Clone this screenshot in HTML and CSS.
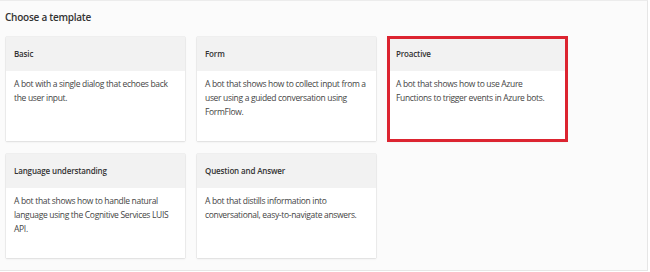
FILE: index.html
```html
<!DOCTYPE html>
<html lang="en">
<head>
  <meta charset="UTF-8">
  <title>Choose a template</title>
  <link rel="stylesheet" href="styles.css">
</head>
<body>
  <div class="panel">
    <h2 class="panel-title">Choose a template</h2>

    <!-- Template cards -->
    <div class="template-grid">
      <div class="card">
        <div class="card-head">Basic</div>
        <div class="card-body">A bot with a single dialog that echoes back the user input.</div>
      </div>
      <div class="card">
        <div class="card-head">Form</div>
        <div class="card-body">A bot that shows how to collect input from a user using a guided conversation using FormFlow.</div>
      </div>
      <div class="card selected">
        <div class="card-head">Proactive</div>
        <div class="card-body">A bot that shows how to use Azure Functions to trigger events in Azure bots.</div>
      </div>
      <div class="card">
        <div class="card-head">Language understanding</div>
        <div class="card-body">A bot that shows how to handle natural language using the Cognitive Services LUIS API.</div>
      </div>
      <div class="card">
        <div class="card-head">Question and Answer</div>
        <div class="card-body">A bot that distills information into conversational, easy-to-navigate answers.</div>
      </div>
    </div>
  </div>
</body>
</html>
```

FILE: styles.css
```css
/* Page */
body {
  margin: 0;
  font-family: "Open Sans", "Noto Sans", sans-serif;
  background: #ffffff;
  color: #333;
}

.panel {
  width: 648px;
  height: 271px;
  box-sizing: border-box;
  border-top: 1px solid #ececec;
  border-right: 1px solid #e6e6e6;
  border-bottom: 1px solid #e6e6e6;
  background: #fbfbfb;
  padding: 9px 0 0 5px;
}

.panel-title {
  margin: 0 0 13px 0;
  font-size: 10px;
  font-weight: 600;
  color: #333;
  line-height: 14px;
  letter-spacing: -0.25px;
}

/* Card grid */
.template-grid {
  display: grid;
  grid-template-columns: repeat(3, 179px);
  column-gap: 12px;
  row-gap: 13px;
  margin-left: 1px;
}

.card {
  height: 104px;
  background: #fff;
  box-shadow: 0 0 1px rgba(0, 0, 0, 0.25), 0 1px 2px rgba(0, 0, 0, 0.08);
}

.card.selected {
  outline: 3px solid #dc2430;
  outline-offset: -2px;
}

.card-head {
  height: 34px;
  background: #f2f2f2;
  padding: 0 8px;
  font-size: 8px;
  font-weight: 600;
  line-height: 34px;
  color: #333;
  letter-spacing: -0.15px;
}

.card-body {
  padding: 6px 8px;
  font-size: 8.5px;
  line-height: 14px;
  color: #444;
  letter-spacing: -0.32px;
}
```
